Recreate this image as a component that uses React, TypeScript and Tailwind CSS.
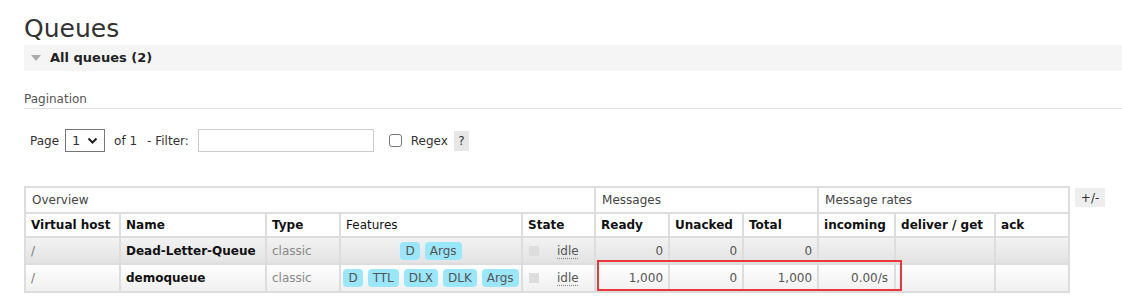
import React from "react";

const cols = [95, 146, 74, 182, 73, 74, 74, 75, 77, 100, 74];

function Badge({ label }: { label: string }) {
  return (
    <span className="inline-flex h-[18px] items-center rounded-[4px] bg-[#9ae6fb] px-[5px] leading-none text-[#555]">
      {label}
    </span>
  );
}

function StateCell() {
  return (
    <td className="border-2 border-[#ddd] px-[6px]">
      <div className="flex items-center">
        <span className="h-[10px] w-[10px] bg-[#ddd]" />
        <span className="ml-[18px] text-[#555] underline decoration-dotted decoration-[#888] underline-offset-[3px]">
          idle
        </span>
      </div>
    </td>
  );
}

export default function App() {
  const rows = [
    {
      name: "Dead-Letter-Queue",
      features: ["D", "Args"],
      ready: "0",
      unacked: "0",
      total: "0",
      incoming: "",
      bg: "bg-linear-to-b from-[#f3f3f3] to-[#e2e2e2]",
      h: "h-[27px]",
    },
    {
      name: "demoqueue",
      features: ["D", "TTL", "DLX", "DLK", "Args"],
      ready: "1,000",
      unacked: "0",
      total: "1,000",
      incoming: "0.00/s",
      bg: "bg-linear-to-b from-[#ffffff] to-[#efefef]",
      h: "h-[28px]",
    },
  ];

  return (
    <div className="h-[302px] w-[1122px] overflow-hidden bg-white pl-6 font-['DejaVu_Sans',Verdana,sans-serif] text-[12px] text-[#222]">
      <h1 className="pt-[14px] text-[25px] leading-[30px] text-[#333]">Queues</h1>

      <div className="mt-px flex h-[26px] items-center bg-[#f5f5f5] pl-[7px]">
        <span className="h-0 w-0 border-x-[5px] border-t-[6px] border-x-transparent border-t-[#aaa]" />
        <span className="ml-[9px] text-[13px] font-bold text-[#222]">All queues (2)</span>
      </div>

      <div className="mt-[21px] border-b border-[#ddd] pb-[2px] text-[12px] leading-[14px] text-[#555]">
        Pagination
      </div>

      <div className="mt-[20px] flex h-[23px] items-center pl-[6px] text-[12px] text-[#333]">
        <span>Page</span>
        <div className="ml-[6px] flex h-[23px] w-[40px] items-center justify-between border border-[#767676] px-[6px]">
          <span className="text-[13px]">1</span>
          <svg width="11" height="8" viewBox="0 0 11 8">
            <path d="M1.5 1.5 L5.5 5.5 L9.5 1.5" fill="none" stroke="#222" strokeWidth="2" />
          </svg>
        </div>
        <span className="ml-[9px]">of 1</span>
        <span className="ml-[10px]">- Filter:</span>
        <div className="ml-[9px] h-[23px] w-[176px] border border-[#ccc] bg-white" />
        <span className="ml-[15px] h-[13px] w-[13px] rounded-[3px] border border-[#777] bg-white" />
        <span className="ml-[9px]">Regex</span>
        <span className="ml-[6px] flex h-[20px] w-[15px] items-center justify-center bg-[#e6e6e6] text-[#333]">
          ?
        </span>
      </div>

      <div className="mt-[34px] flex items-start">
        <div className="relative">
          <table className="table-fixed border-collapse border-2 border-[#ddd]" style={{ width: 1044 }}>
            <colgroup>
              {cols.map((w, i) => (
                <col key={i} style={{ width: w }} />
              ))}
            </colgroup>
            <thead>
              <tr className="h-[26px] text-left font-normal text-[#444]">
                <th colSpan={5} className="border-2 border-[#ddd] px-[6px] font-normal">
                  Overview
                </th>
                <th colSpan={3} className="border-2 border-[#ddd] px-[6px] font-normal">
                  Messages
                </th>
                <th colSpan={3} className="border-2 border-[#ddd] px-[6px] font-normal">
                  Message rates
                </th>
              </tr>
              <tr className="h-[24px] text-left font-bold text-[#111]">
                <th className="border-2 border-[#ddd] px-[5px]">Virtual host</th>
                <th className="border-2 border-[#ddd] px-[5px]">Name</th>
                <th className="border-2 border-[#ddd] px-[5px]">Type</th>
                <th className="border-2 border-[#ddd] px-[5px] font-normal">Features</th>
                <th className="border-2 border-[#ddd] px-[5px]">State</th>
                <th className="border-2 border-[#ddd] px-[5px]">Ready</th>
                <th className="border-2 border-[#ddd] px-[5px]">Unacked</th>
                <th className="border-2 border-[#ddd] px-[5px]">Total</th>
                <th className="border-2 border-[#ddd] px-[5px]">incoming</th>
                <th className="border-2 border-[#ddd] px-[5px]">deliver / get</th>
                <th className="border-2 border-[#ddd] px-[5px]">ack</th>
              </tr>
            </thead>
            <tbody>
              {rows.map((r) => (
                <tr key={r.name} className={`${r.h} ${r.bg}`}>
                  <td className="border-2 border-[#ddd] px-[5px] text-[#777]">/</td>
                  <td className="border-2 border-[#ddd] px-[5px] font-bold text-[#111]">{r.name}</td>
                  <td className="border-2 border-[#ddd] px-[5px] text-[#888]">classic</td>
                  <td className="border-2 border-[#ddd] px-[5px]">
                    <div className="flex justify-center gap-[5px]">
                      {r.features.map((f) => (
                        <Badge key={f} label={f} />
                      ))}
                    </div>
                  </td>
                  <StateCell />
                  <td className="border-2 border-[#ddd] px-[5px] text-right text-[#555]">{r.ready}</td>
                  <td className="border-2 border-[#ddd] px-[5px] text-right text-[#555]">{r.unacked}</td>
                  <td className="border-2 border-[#ddd] px-[5px] text-right text-[#555]">{r.total}</td>
                  <td className="border-2 border-[#ddd] px-[6px] text-right text-[#555]">{r.incoming}</td>
                  <td className="border-2 border-[#ddd] px-[5px]" />
                  <td className="border-2 border-[#ddd] px-[5px]" />
                </tr>
              ))}
            </tbody>
          </table>
          <div className="pointer-events-none absolute left-[573px] top-[74px] h-[31px] w-[305px] border-2 border-[#e8383d]" />
        </div>
        <span className="ml-[5px] mt-[2px] flex h-[19px] w-[30px] items-center justify-center bg-[#eee] text-[12px] text-[#333]">
          +/-
        </span>
      </div>
    </div>
  );
}
